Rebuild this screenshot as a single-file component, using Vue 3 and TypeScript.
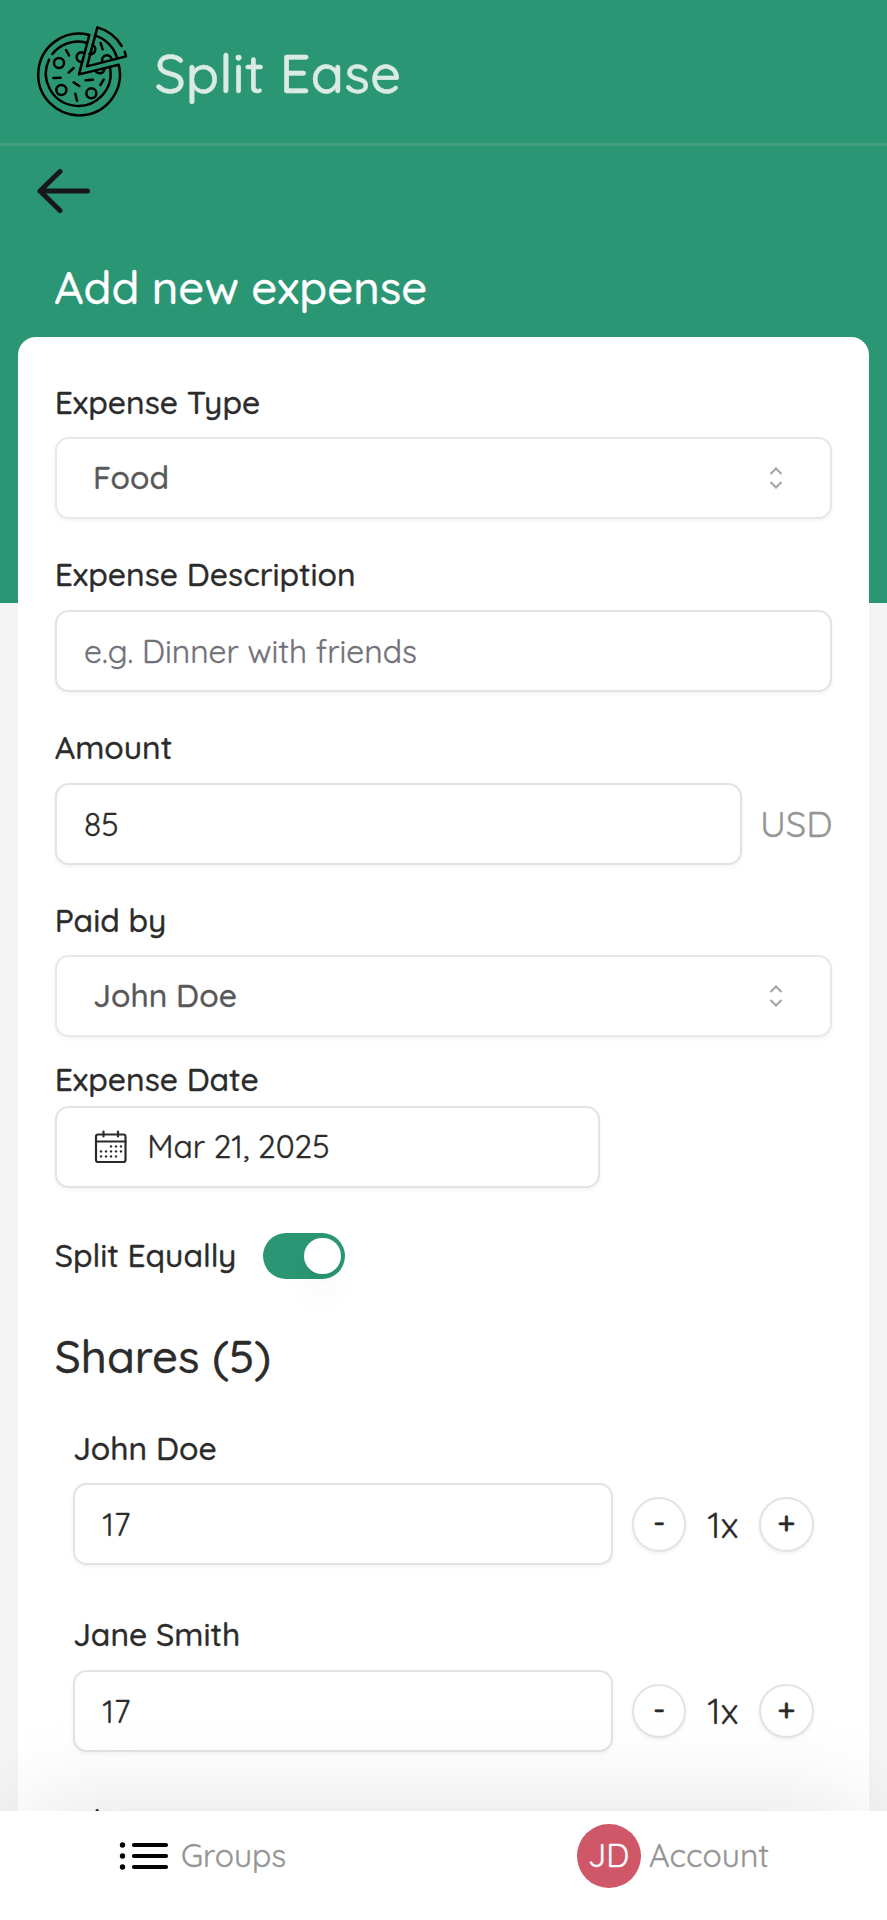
<script setup lang="ts">
import { ref } from 'vue'

interface Share {
  name: string
  amount: number
  factor: number
}

const expenseType = ref('Food')
const description = ref('')
const amount = ref('85')
const payer = ref('John Doe')
const date = ref('Mar 21, 2025')
const splitEqually = ref(true)
const shares = ref<Share[]>([
  { name: 'John Doe', amount: 17, factor: 1 },
  { name: 'Jane Smith', amount: 17, factor: 1 },
  { name: 'Alice', amount: 17, factor: 1 },
])
const calendarDots = [
  [17, 17], [22, 17], [27, 17],
  [7, 22], [12, 22], [17, 22], [22, 22], [27, 22],
  [7, 27], [12, 27], [17, 27], [22, 27],
]
</script>

<template>
  <div class="screen">
    <header class="brand">
      <svg class="logo" viewBox="40 25 290 290" fill="none" stroke="#000" stroke-width="7.5" stroke-linecap="round" stroke-linejoin="round">
        <path d="M209 61A122.500 122.500 0 1 0 297 150L178 179L209 61" />
        <path d="M200 84A97 97 0 0 0 98 118" />
        <path d="M88 135A97 97 0 1 0 271 159" />
        <path d="M306 94A122 122 0 0 0 233 38L202 155L319 125L315 111" />
        <path d="M226 63A98 98 0 0 1 292 129" />
        <path d="M219 91A14.500 14.500 0 0 1 209 118M248 141A14.500 14.500 0 1 1 276 134" />
        <path d="M190 114A14.500 14.500 0 1 0 183 142M229 171A14.500 14.500 0 0 0 254 165" />
        <circle cx="118" cy="145" r="15" />
        <circle cx="125" cy="226" r="15" />
        <circle cx="215" cy="236" r="15" />
        <path d="M139 106L148 122M162 160L147 174M101 190L123 189M162 203L179 214M198 197L220 195M252 195L242 211M167 237L172 258M243 85L249 104" />
      </svg>
      <span class="brand-name">Split Ease</span>
    </header>

    <div class="hero">
      <svg class="back" viewBox="0 0 54 44" fill="none" stroke="#18181b" stroke-width="5" stroke-linecap="round" stroke-linejoin="round">
        <path d="M23 2.500L3 22L23 41.500M3 22H50.500" />
      </svg>
      <h1>Add new expense</h1>
    </div>

    <main class="card">
      <section class="field">
        <label>Expense Type</label>
        <div class="box select">
          <span>{{ expenseType }}</span>
          <svg class="chevrons" viewBox="0 0 14 22"><path d="M1.500 7L7 1.500L12.500 7M1.500 15L7 20.500L12.500 15" /></svg>
        </div>
      </section>
      <section class="field">
        <label>Expense Description</label>
        <div class="box"><span v-if="description">{{ description }}</span><span v-else class="placeholder">e.g. Dinner with friends</span></div>
      </section>
      <section class="field">
        <label>Amount</label>
        <div class="row">
          <div class="box amount">{{ amount }}</div>
          <span class="currency">USD</span>
        </div>
      </section>
      <section class="field payer">
        <label>Paid by</label>
        <div class="box select">
          <span>{{ payer }}</span>
          <svg class="chevrons" viewBox="0 0 14 22"><path d="M1.500 7L7 1.500L12.500 7M1.500 15L7 20.500L12.500 15" /></svg>
        </div>
      </section>
      <section class="field date">
        <label>Expense Date</label>
        <div class="box date-box">
          <svg class="calendar" viewBox="0 0 34 34">
            <rect x="2" y="4.500" width="29.500" height="27.500" rx="2" />
            <path d="M2 11.500H31.500M9.500 1.500V6.500M24 1.500V6.500" />
            <circle v-for="[x, y] in calendarDots" :key="`${x}-${y}`" :cx="x" :cy="y - 0.6" r="1.200" />
          </svg>
          <span>{{ date }}</span>
        </div>
      </section>
      <div class="split">
        <label>Split Equally</label>
        <button class="switch" :class="{ on: splitEqually }" @click="splitEqually = !splitEqually"><i></i></button>
      </div>
      <h2>Shares (5)</h2>
      <section v-for="share in shares" :key="share.name" class="share">
        <label>{{ share.name }}</label>
        <div class="row">
          <div class="box share-box">{{ share.amount }}</div>
          <button class="round minus">-</button>
          <span class="factor">{{ share.factor }}x</span>
          <button class="round">+</button>
        </div>
      </section>
    </main>

    <nav class="tabs">
      <a class="tab groups">
        <svg class="list" viewBox="0 0 50 30">
          <circle cx="3.500" cy="4" r="2.700" /><circle cx="3.500" cy="15" r="2.700" /><circle cx="3.500" cy="26" r="2.700" />
          <path d="M15 4H47M15 15H47M15 26H47" />
        </svg>
        <span>Groups</span>
      </a>
      <a class="tab account">
        <span class="avatar">JD</span>
        <span>Account</span>
      </a>
    </nav>
  </div>
</template>

<style>
body {
  margin: 0;
}
</style>

<style scoped>
.screen {
  position: relative;
  box-sizing: border-box;
  height: 1920px;
  overflow: hidden;
  background: linear-gradient(#2b9674 603px, #f4f4f4 603px);
  color: #2b2b2b;
  font: 400 31.84px/1 Quicksand, Lato, sans-serif;
  -webkit-text-stroke: 0.35px currentColor;
}
.brand {
  display: flex;
  align-items: center;
  box-sizing: border-box;
  height: 146px;
  padding-left: 32.8px;
  border-bottom: 3px solid #409f7f;
}
.logo {
  width: 96.7px;
  height: 96.7px;
}
.brand-name {
  margin: 3px 0 0 25px;
  color: #d9ebe4;
  font-size: 54.6px;
  font-weight: 500;
}
.hero {
  box-sizing: border-box;
  height: 190.500px;
  padding: 23px 0 0 36.5px;
}
.back {
  display: block;
  width: 54px;
  height: 44px;
}
h1 {
  margin: 52px 0 0 17.7px;
  color: #fff;
  font-size: 45.48px;
  font-weight: 500;
}
.card {
  box-sizing: border-box;
  width: 851px;
  margin-left: 18px;
  padding: 50px 36.7px 0;
  border-radius: 18px 18px 0 0;
  background: #fff;
}
label {
  display: block;
  font-weight: 500;
}
.field {
  margin-bottom: 40px;
}
.field label,
.share label {
  margin-bottom: 19px;
}
.box {
  display: flex;
  align-items: center;
  box-sizing: border-box;
  height: 81.86px;
  padding: 2px 27.3px 0;
  border: 2px solid #e3e3e4;
  border-radius: 13.6px;
  background: #fff;
  box-shadow: 0 2px 4px rgba(0, 0, 0, 0.05);
}
.select {
  justify-content: space-between;
  padding: 0 47.5px 1px 36.4px;
  border-color: #e8e8ea;
  color: #585858;
  font-weight: 500;
}
.placeholder {
  color: #71717a;
}
.chevrons {
  width: 14px;
  height: 22px;
  margin-top: 1px;
  fill: none;
  stroke: #a3a3a3;
  stroke-width: 2;
}
.row {
  display: flex;
  align-items: center;
}
.amount {
  width: 688px;
}
.currency {
  margin: 2px 0 0 18px;
  color: #959595;
  font-size: 36.4px;
}
.payer {
  margin-bottom: 27px;
}
.date label {
  margin-bottom: 10px;
}
.date {
  margin-bottom: 45px;
}
.date-box {
  width: 545px;
  padding: 0 36.500px;
}
.calendar {
  width: 34px;
  height: 34px;
  margin: 0 19.5px 0 0.5px;
  fill: none;
  stroke: #2b2b2b;
  stroke-width: 2.2;
  stroke-linecap: round;
}
.calendar circle {
  fill: #2b2b2b;
  stroke: none;
}
.split {
  display: flex;
  align-items: center;
}
.switch {
  display: flex;
  box-sizing: border-box;
  width: 82px;
  height: 45.5px;
  margin-left: 27px;
  padding: 4.500px;
  border: 0;
  border-radius: 23px;
  background: #a1a1aa;
}
.switch.on {
  justify-content: flex-end;
  background: #2b9674;
}
.switch i {
  width: 36.5px;
  height: 36.5px;
  border-radius: 50%;
  background: #fff;
  box-shadow: 0 23px 34px -7px rgba(0, 0, 0, 0.08), 0 9px 14px -9px rgba(0, 0, 0, 0.1);
}
h2 {
  margin: 55px 0 53.5px;
  font-size: 45.48px;
  font-weight: 500;
}
.share {
  margin: 0 0 54px 18.2px;
}
.share-box {
  width: 540.500px;
}
.round {
  box-sizing: border-box;
  width: 54.6px;
  height: 54.6px;
  padding: 0 0 2px;
  border: 2px solid #e3e3e4;
  border-radius: 50%;
  background: #fff;
  box-shadow: 0 2px 4px rgba(0, 0, 0, 0.06);
  color: #2b2b2b;
  font: 500 31.84px/1 Quicksand, Lato, sans-serif;
}
.minus {
  margin-left: 18.5px;
}
.factor {
  width: 72.6px;
  padding-top: 1px;
  text-align: center;
  font-size: 36.4px;
}
.tabs {
  position: absolute;
  right: 0;
  bottom: 0;
  left: 0;
  display: flex;
  height: 109px;
  background: #fff;
  box-shadow: 0 -8px 110px -27px rgba(0, 0, 0, 0.22);
  color: #959595;
}
.tab {
  display: flex;
  align-items: center;
  height: 90px;
}
.groups {
  width: 457.5px;
  padding-left: 119px;
}
.list {
  width: 50px;
  height: 30px;
  margin-right: 12px;
  stroke: #000;
  stroke-width: 4.2;
  stroke-linecap: round;
}
.list circle {
  stroke: none;
}
.avatar {
  display: flex;
  align-items: center;
  justify-content: center;
  width: 64px;
  height: 64px;
  margin-right: 8.5px;
  border-radius: 50%;
  background: #cf5768;
  color: #fff;
}
</style>
